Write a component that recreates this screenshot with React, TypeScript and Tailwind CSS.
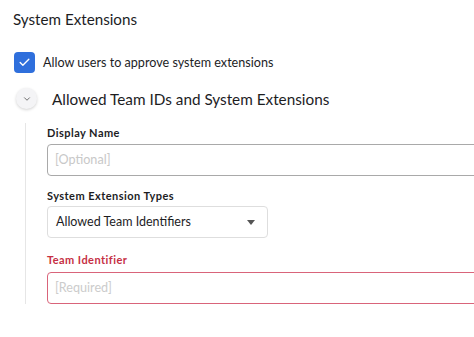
import { Check, ChevronDown } from "lucide-react";

function App() {
  return (
    <div
      className="w-[474px] h-[337px] overflow-hidden bg-white text-[#1d1d1f]"
      style={{ fontFamily: "Lato, 'Liberation Sans', sans-serif" }}
    >
      <div className="pl-[13px] pt-[9px]">
        <h1 className="text-[15.2px] leading-[20px]">System Extensions</h1>

        {/* allow checkbox */}
        <label className="mt-[23px] flex items-center gap-[8px] pl-[1px]">
          <span className="flex h-[21px] w-[21px] items-center justify-center rounded-[4px] bg-[#2f6fdc]">
            <Check size={13} strokeWidth={2.5} className="text-white" />
          </span>
          <span className="text-[12.6px] leading-[19px]">Allow users to approve system extensions</span>
        </label>

        {/* section header */}
        <div className="mt-[15px] flex items-center gap-[15px]">
          <button className="ml-[3px] flex h-[21px] w-[21px] items-center justify-center rounded-full bg-[#f4f4f6] shadow-[0_1px_3px_rgba(0,0,0,0.18)]">
            <ChevronDown size={10} strokeWidth={2} className="text-[#555]" />
          </button>
          <span className="text-[15.3px] leading-[20px]">Allowed Team IDs and System Extensions</span>
        </div>

        {/* section body */}
        <div className="ml-[12px] mt-[14px] border-l border-[#e6e6e6] pl-[21px]">
          <div className="pt-[3px] text-[11px] font-bold leading-[14px] tracking-[0.45px]">Display Name</div>
          <div className="mt-[4px] flex h-[32px] w-[440px] items-center rounded-[4px] border border-[#a9a9a9] px-[7px] text-[12.6px] text-[#c8c8c8]">
            [Optional]
          </div>

          <div className="mt-[13px] text-[11px] font-bold leading-[14px] tracking-[0.45px]">System Extension Types</div>
          <div className="mt-[3px] flex h-[32px] w-[221px] items-center justify-between rounded-[4px] border border-[#dedede] pl-[8px] pr-[12px] text-[12.5px]">
            <span>Allowed Team Identifiers</span>
            <svg width="8" height="5" viewBox="0 0 8 5">
              <path d="M0 0 H8 L4 5 Z" fill="#555" />
            </svg>
          </div>

          <div className="mt-[15px] text-[11px] font-bold leading-[14px] tracking-[0.45px] text-[#c62f44]">Team Identifier</div>
          <div className="mt-[5px] flex h-[32px] w-[440px] items-center rounded-[4px] border border-[#d9647a] px-[7px] text-[12.6px] text-[#cccccc]">
            [Required]
          </div>
        </div>
      </div>
    </div>
  );
}

export default App;
